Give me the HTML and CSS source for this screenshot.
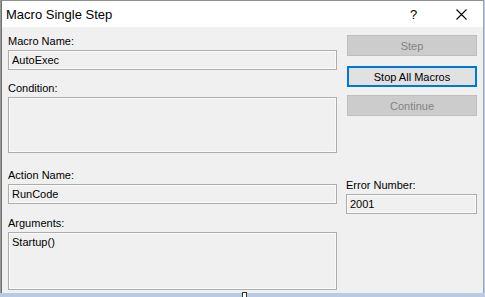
FILE: index.html
```html
<!DOCTYPE html>
<html>
<head>
<meta charset="utf-8">
<link rel="stylesheet" href="styles.css">
</head>
<body>
<div class="window">
  <div class="titlebar">
    <span class="title">Macro Single Step</span>
    <span class="help">?</span>
    <span class="close">
      <svg width="11" height="11" viewBox="0 0 11 11"><path d="M0.5 0.5L10.5 10.5M10.5 0.5L0.5 10.5" stroke="#000" stroke-width="1.1" fill="none"/></svg>
    </span>
  </div>
  <div class="content">
    <div class="left">
      <div class="label">Macro Name:</div>
      <div class="field single">AutoExec</div>
      <div class="label gap1">Condition:</div>
      <div class="field cond"></div>
      <div class="label gap2">Action Name:</div>
      <div class="field single">RunCode</div>
      <div class="label gap3">Arguments:</div>
      <div class="field args">Startup()</div>
    </div>
    <div class="right">
      <div class="btn disabled">Step</div>
      <div class="btn default">Stop All Macros</div>
      <div class="btn disabled cont">Continue</div>
      <div class="label errlabel">Error Number:</div>
      <div class="field single err">2001</div>
    </div>
  </div>
  <div class="handle"></div>
</div>
</body>
</html>
```
FILE: styles.css
```css
html, body {
  margin: 0;
  padding: 0;
}
body {
  width: 485px;
  height: 297px;
  background: #b9cbe2;
  overflow: hidden;
  font-family: "Liberation Sans", Arial, sans-serif;
}
.window {
  position: relative;
  width: 481px;
  height: 292px;
  border-left: 1px solid #6f6f6f;
  border-top: 1px solid #8f8f8f;
  border-right: 1px solid #a0a8b4;
  display: flex;
  flex-direction: column;
  background: #f0f0f0;
  box-shadow: -1px 0 0 #9a9a9a;
  margin-left: 1px;
}
.titlebar {
  height: 26px;
  background: #fff;
  display: flex;
  align-items: center;
  padding-left: 4px;
  font-size: 13px;
  color: #000;
}
.title {
  flex: 1;
}
.help {
  width: 12px;
  margin-right: 34px;
  font-size: 13px;
}
.close {
  width: 11px;
  height: 11px;
  margin-right: 16px;
  display: flex;
}
.content {
  flex: 1;
  display: flex;
  padding: 8px 0 0 6px;
  font-size: 11px;
  color: #000;
}
.left {
  width: 329px;
  display: flex;
  flex-direction: column;
}
.label {
  height: 13px;
  line-height: 13px;
  margin-bottom: 2px;
}
.gap1 { margin-top: 12px; }
.gap2 { margin-top: 16px; }
.gap3 { margin-top: 13px; }
.field {
  box-sizing: border-box;
  border: 1px solid #adadad;
  box-shadow: inset 0 0 0 1px #fafafa;
  background: #f0f0f0;
  padding-left: 3px;
}
.single {
  height: 20px;
  line-height: 18px;
}
.cond {
  height: 56px;
}
.args {
  height: 58px;
  padding-top: 2px;
  line-height: 14px;
}
.right {
  width: 131px;
  margin-left: 9px;
  display: flex;
  flex-direction: column;
}
.btn {
  box-sizing: border-box;
  height: 21px;
  margin-left: 1px;
  display: flex;
  align-items: center;
  justify-content: center;
  font-size: 11px;
}
.disabled {
  background: #cccccc;
  border: 1px solid #bfbfbf;
  color: #838383;
}
.default {
  margin-top: 10px;
  background: #e1e1e1;
  border: 2px solid #0078d7;
  color: #000;
}
.cont {
  margin-top: 8px;
}
.errlabel {
  margin-top: 63px;
}
.err {
  width: 131px;
}
.handle {
  position: absolute;
  left: 240px;
  bottom: -5px;
  width: 3px;
  height: 4px;
  background: #fff;
  border: 1px solid #333;
}
```
